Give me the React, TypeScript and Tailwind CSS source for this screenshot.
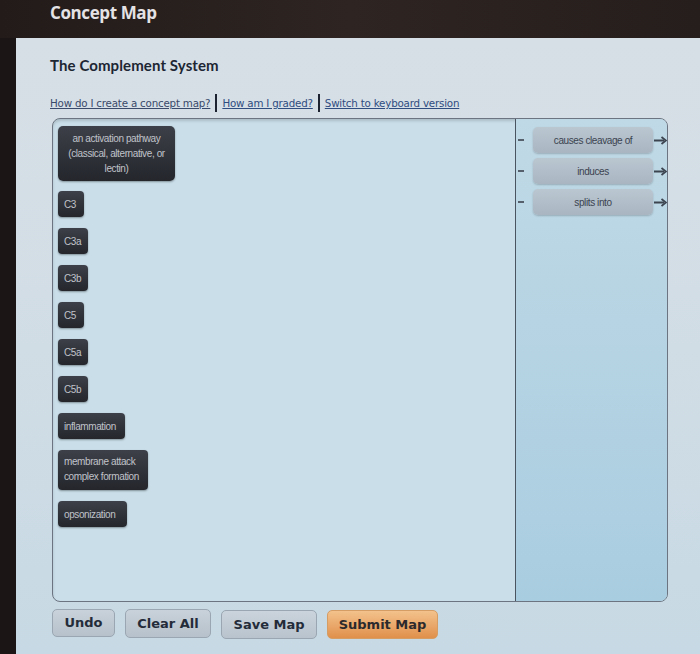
import React from 'react'

const nodes: { label: string; w: string; multi?: boolean }[] = [
  { label: 'C3', w: 'w-[26px]' },
  { label: 'C3a', w: 'w-[30px]' },
  { label: 'C3b', w: 'w-[30px]' },
  { label: 'C5', w: 'w-[26px]' },
  { label: 'C5a', w: 'w-[30px]' },
  { label: 'C5b', w: 'w-[30px]' },
  { label: 'inflammation', w: 'w-[67px]' },
  { label: 'membrane attack complex formation', w: 'w-[90px]', multi: true },
  { label: 'opsonization', w: 'w-[69px]' },
]

const links = ['causes cleavage of', 'induces', 'splits into']

const Node = ({ label, w, multi }: { label: string; w: string; multi?: boolean }) => (
  <div
    className={`${w} ${multi ? 'h-[40px] py-[4px]' : 'h-[26px] items-center'} flex rounded-[4px] bg-gradient-to-b from-[#3d4048] to-[#24262c] px-[6px] text-[10px] leading-[15px] tracking-[-0.4px] text-[#c0c3ca] shadow-[0_1px_2px_rgba(0,0,0,0.35)]`}
    style={{ fontFamily: '"Liberation Sans", Arial, sans-serif' }}
  >
    {label}
  </div>
)

const Arrow = () => (
  <svg width="13" height="9" viewBox="0 0 13 9" className="shrink-0">
    <path d="M0 4.5H10" stroke="#3c4450" strokeWidth="2" />
    <path d="M7.5 1L12 4.5L7.5 8" fill="none" stroke="#3c4450" strokeWidth="1.8" />
  </svg>
)

export default function App() {
  return (
    <div className="flex h-[654px] w-[700px] flex-col overflow-hidden bg-[#1b1615]">
      <div className="flex h-[38px] shrink-0 items-start bg-gradient-to-r from-[#221b19] via-[#2e2522] to-[#261e1c] pl-[50px] pt-0">
        <span
          className="text-[17px] font-bold tracking-[-0.4px] text-[#e4e2e4]"
          style={{ fontFamily: '"Open Sans", "DejaVu Sans", sans-serif' }}
        >
          Concept Map
        </span>
      </div>
      <div className="flex flex-1">
        <div className="w-[16px] shrink-0 bg-[#1b1615]" />
        <div className="flex flex-1 flex-col bg-gradient-to-b from-[#d7dfe6] via-[#d1dde5] to-[#c7d9e4] pl-[34px]">
          <h1
            className="mt-[17px] text-[15px] font-bold leading-[20px] text-[#1d2633]"
            style={{ fontFamily: 'Lato, "DejaVu Sans", sans-serif', letterSpacing: '0.1px' }}
          >
            The Complement System
          </h1>
          <div
            className="mt-[19px] flex items-center text-[10.3px] leading-[14px] tracking-[-0.2px] text-[#3a4a6a]"
            style={{ fontFamily: '"DejaVu Sans", sans-serif' }}
          >
            <span className="underline">How do I create a concept map?</span>
            <span className="mx-[5px] h-[18px] w-[2px] bg-[#1d2330]" />
            <span className="text-[#2f4c80] underline">How am I graded?</span>
            <span className="mx-[5px] h-[18px] w-[2px] bg-[#1d2330]" />
            <span className="text-[#2f4c80] underline">Switch to keyboard version</span>
          </div>
          <div className="ml-[2px] mt-[6px] flex h-[484px] w-[616px] overflow-hidden rounded-[8px] border border-[#6b7480] bg-[#c9dee9] shadow-[inset_0_2px_3px_rgba(0,0,0,0.15)]">
            <div className="flex w-[465px] flex-col items-start gap-[11px] pl-[5px] pt-[7px]">
              <div
                className="mb-[-1px] flex h-[55px] w-[117px] items-start justify-center rounded-[5px] bg-gradient-to-b from-[#3d4048] to-[#24262c] px-[6px] pt-[5px] text-center text-[10px] leading-[15px] tracking-[-0.4px] text-[#c0c3ca] shadow-[0_1px_2px_rgba(0,0,0,0.35)]"
                style={{ fontFamily: '"Liberation Sans", Arial, sans-serif' }}
              >
                an activation pathway (classical, alternative, or lectin)
              </div>
              {nodes.map((n) => (
                <Node key={n.label} label={n.label} w={n.w} multi={n.multi} />
              ))}
            </div>
            <div className="flex flex-1 flex-col gap-[5px] border-l border-[#4a5360] bg-gradient-to-b from-[#c0d9e6] to-[#a9cde0] pt-[8px]">
              {links.map((l) => (
                <div key={l} className="flex items-center">
                  <div className="ml-[2px] h-[2px] w-[6px] bg-[#56606c]" />
                  <div
                    className="ml-[9px] flex h-[26px] w-[120px] items-center justify-center rounded-[5px] bg-gradient-to-b from-[#bac6d0] to-[#a9b6c2] text-[10px] tracking-[-0.4px] text-[#3b4350] shadow-[0_1px_2px_rgba(0,0,0,0.2)]"
                    style={{ fontFamily: '"Liberation Sans", Arial, sans-serif' }}
                  >
                    {l}
                  </div>
                  <div className="ml-[1px]">
                    <Arrow />
                  </div>
                </div>
              ))}
            </div>
          </div>
          <div
            className="ml-[2px] mt-[7px] flex items-start gap-[10px] text-[13px] font-bold text-[#242c3a]"
            style={{ fontFamily: '"DejaVu Sans", sans-serif' }}
          >
            <button className="h-[28px] w-[63px] rounded-[5px] border border-[#9aa6b2] bg-gradient-to-b from-[#c9d2da] to-[#b6c1cb]">
              Undo
            </button>
            <button className="h-[29px] w-[86px] rounded-[5px] border border-[#9aa6b2] bg-gradient-to-b from-[#c9d2da] to-[#b6c1cb]">
              Clear All
            </button>
            <button className="mt-[1px] h-[29px] w-[96px] rounded-[5px] border border-[#9aa6b2] bg-gradient-to-b from-[#cbd4dc] to-[#b8c3cd]">
              Save Map
            </button>
            <button className="mt-[1px] h-[29px] w-[111px] rounded-[5px] border border-[#d59c63] bg-gradient-to-b from-[#f3c28c] to-[#e0904a] text-[#2c2a2c]">
              Submit Map
            </button>
          </div>
        </div>
      </div>
    </div>
  )
}
